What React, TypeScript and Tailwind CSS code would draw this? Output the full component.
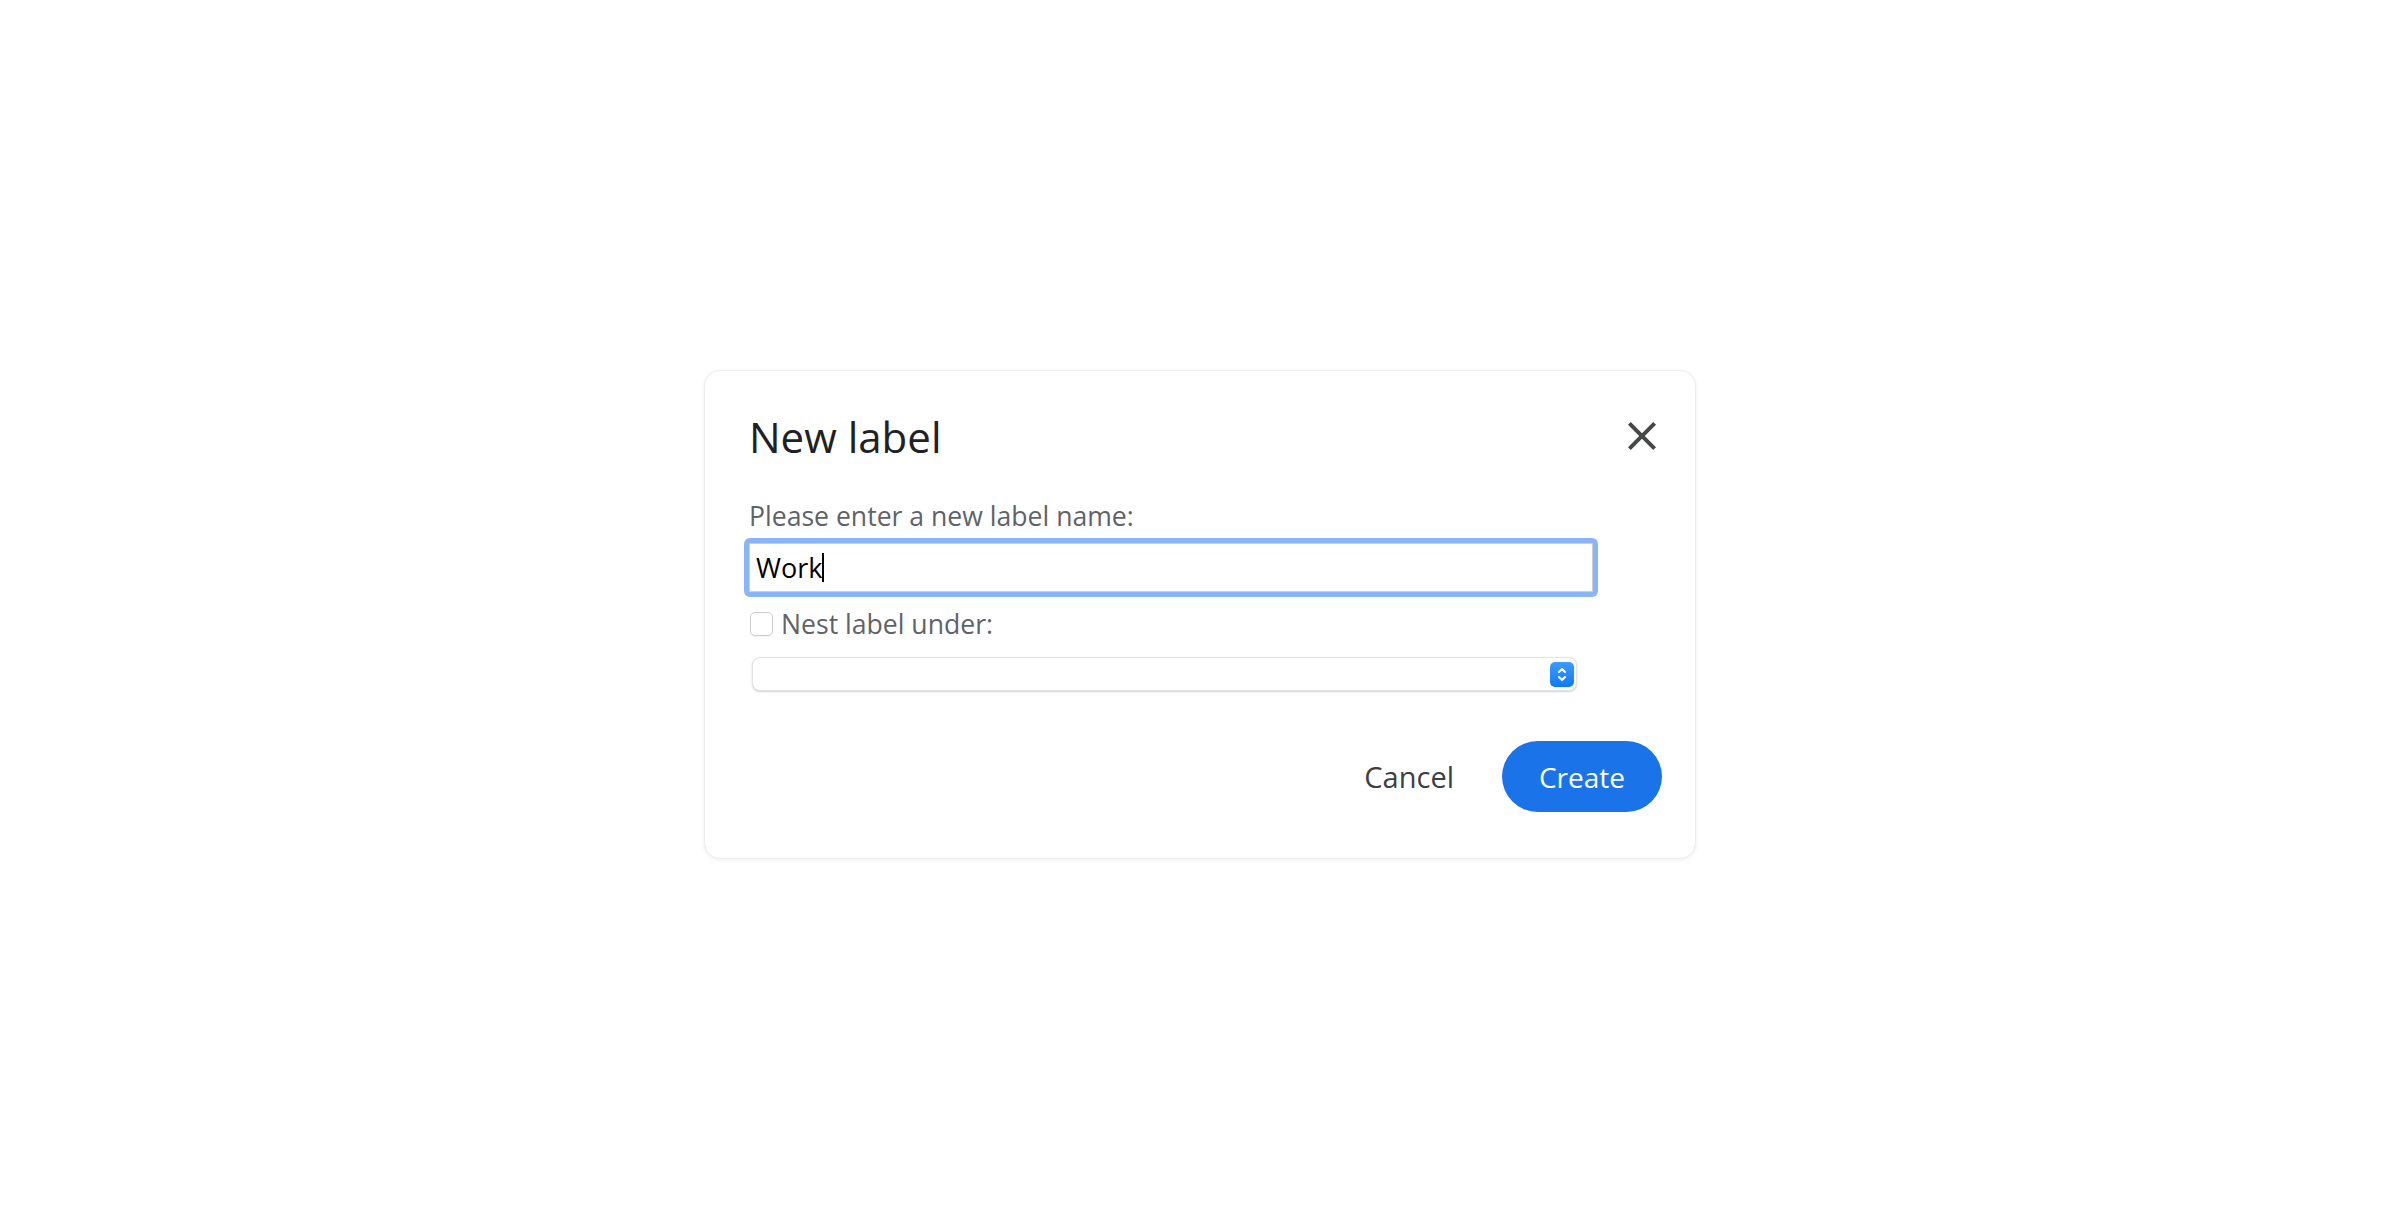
import { useState } from "react";

const font = { fontFamily: '"Open Sans", "Liberation Sans", sans-serif' };

function CloseIcon() {
  return (
    <svg width="48" height="48" viewBox="0 0 24 24" fill="#444746">
      <path d="M19 6.41L17.59 5 12 10.59 6.41 5 5 6.41 10.59 12 5 17.59 6.41 19 12 13.41 17.59 19 19 17.59 13.41 12z" />
    </svg>
  );
}

function Stepper() {
  return (
    <div className="w-[24px] h-[25px] rounded-[5px] bg-gradient-to-b from-[#3d9bff] to-[#0a7bf5] flex items-center justify-center">
      <svg width="12" height="17" viewBox="0 0 12 17" fill="none" stroke="white" strokeWidth="2" strokeLinecap="round" strokeLinejoin="round">
        <path d="M3 6l3-3 3 3" />
        <path d="M3 11l3 3 3-3" />
      </svg>
    </div>
  );
}

export default function App() {
  const [nested, setNested] = useState(false);

  return (
    <div className="w-full h-[1226px] bg-white flex items-center justify-center pt-[3px]" style={font}>
      <div className="w-[992px] rounded-[16px] bg-white border border-[#ededed] shadow-[0_1px_4px_rgba(0,0,0,0.07)] pl-[44px] pr-[33px] pt-[42px] pb-[46px] flex flex-col">
        <div className="flex items-center justify-between h-[48px]">
          <h1 className="text-[42px] leading-[44px] text-[#202124]">New label</h1>
          <button className="w-[48px] h-[48px] -mr-[4px] -mt-[2px] flex items-center justify-center">
            <CloseIcon />
          </button>
        </div>

        <label className="mt-[42px] text-[26.6px] leading-[26px] text-[#5f6368]">Please enter a new label name:</label>

        <div className="mt-[14px] w-[844px] h-[49px] rounded-[2px] border border-[#cfcfcf] ring-[5px] ring-[#8ab4f8] flex items-center pl-[6px] text-[27px] leading-[27px] text-black">
          <span>Work</span>
          <span className="w-[2px] h-[29px] bg-black" />
        </div>

        <div className="mt-[19px] flex items-center h-[26px]">
          <button
            onClick={() => setNested((v) => !v)}
            className={`ml-[1px] w-[23px] h-[24px] rounded-[5px] border ${nested ? "bg-[#1a73e8] border-[#1a73e8]" : "bg-white border-[#cdcdcd]"} shadow-[0_1px_1px_rgba(0,0,0,0.05)]`}
          />
          <span className="ml-[8px] text-[26.6px] leading-[26px] text-[#5f6368]">Nest label under:</span>
        </div>

        <div className="mt-[20px] ml-[3px] w-[825px] h-[34px] rounded-[8px] bg-white border border-[#e3e3e3] shadow-[0_1px_2px_rgba(0,0,0,0.18)] flex items-center justify-end pr-[2px]">
          <Stepper />
        </div>

        <div className="mt-[50px] flex justify-end items-center gap-[26px]">
          <button className="h-[71px] px-[22px] rounded-full text-[29px] font-medium text-[#3c4043]">Cancel</button>
          <button className="h-[71px] w-[160px] rounded-full bg-[#1a73e8] text-[28px] font-medium text-white">Create</button>
        </div>
      </div>
    </div>
  );
}
